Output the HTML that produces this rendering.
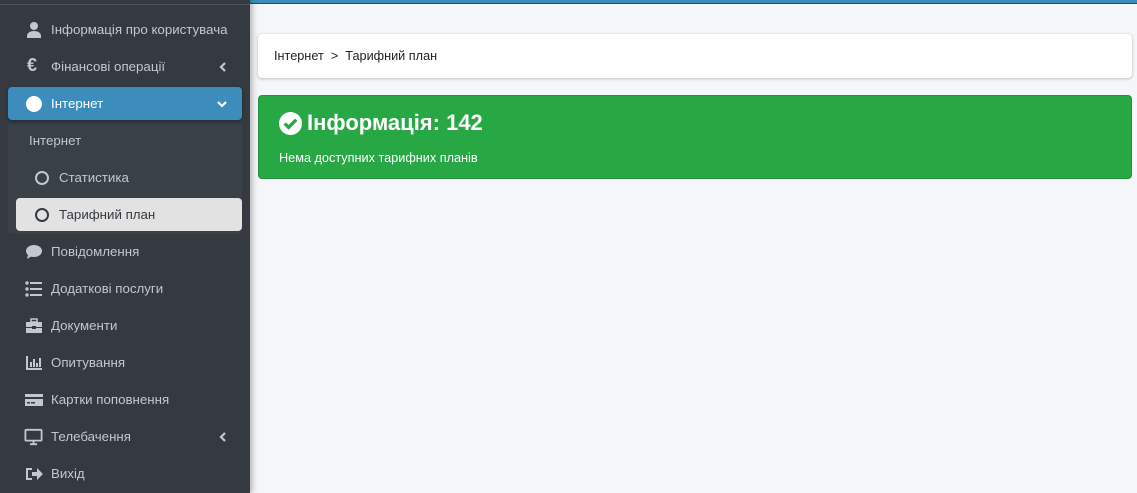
<!DOCTYPE html>
<html><head><meta charset="utf-8"><style>
*{box-sizing:border-box;margin:0;padding:0}
body{width:1137px;height:493px;overflow:hidden;background:#f4f6f9;font-family:"Liberation Sans","DejaVu Sans",sans-serif;font-size:13px;position:relative}
.top{position:absolute;left:250px;top:0;width:887px;height:4px;background:#3c8dbc;border-bottom:1px solid #444}
.sb{position:absolute;left:0;top:0;width:250px;height:493px;background:#343a40;box-shadow:2px 0 6px rgba(0,0,0,.3)}
.sb .tl{position:absolute;left:0;top:4px;width:250px;height:1px;background:#4b545c}
.it{position:absolute;left:8px;width:234px;height:33px;color:#c2c7d0;display:flex;align-items:center;padding-left:43px;font-size:13.3px}
.ic{position:absolute;left:17px;top:8px;width:18px;height:18px}
.act{background:#3c8dbc;color:#fff;border-radius:4px;box-shadow:0 1px 3px rgba(0,0,0,.3)}
.chev{position:absolute;right:15px;top:12px;width:8px;height:10px}
.sub{position:absolute;left:8px;top:124px;width:234px;height:110px;background:#3a4047;border-radius:0 0 4px 4px}
.sel{background:#e2e2e2;color:#343a40}
.circ{position:absolute;left:19px;top:10px;width:14px;height:14px;border:2px solid currentColor;border-radius:50%}
.card{position:absolute;left:258px;top:34px;width:874px;height:44px;background:#fff;border-radius:4px;box-shadow:0 0 1px rgba(0,0,0,.2),0 1px 3px rgba(0,0,0,.2);padding:15px 16px;color:#212529;font-size:12.7px}
.alert{position:absolute;left:258px;top:95px;width:874px;height:84px;background:#28a745;border:1px solid #23923d;border-radius:4px;color:#fff}
.alert h5{position:absolute;left:20px;top:14px;font-size:22px;font-weight:bold;display:flex;align-items:center;gap:5px}
.alert p{position:absolute;left:20px;top:55px;font-size:12.7px}
</style></head><body>
<div class="top"></div>
<div class="sb"><div class="tl"></div>
<div class="it" style="top:13px"><svg class="ic" viewBox="0 0 18 18"><circle cx="9" cy="5" r="4" fill="#c2c7d0"/><path d="M2 17v-2c0-3 3-5 7-5s7 2 7 5v2z" fill="#c2c7d0"/></svg>Інформація про користувача</div>
<div class="it" style="top:50px"><span style="position:absolute;left:19px;top:5px;font-weight:bold;font-size:18px;color:#c2c7d0">€</span>Фінансові операції<svg class="chev" viewBox="0 0 8 10"><path d="M6 1L2 5l4 4" stroke="#c2c7d0" stroke-width="2.2" fill="none"/></svg></div>
<div class="it act" style="top:87px"><svg class="ic" viewBox="0 0 18 18"><circle cx="9" cy="9" r="8" fill="#fff"/></svg>Інтернет<svg class="chev" viewBox="0 0 10 8" style="width:10px;height:8px;top:13px"><path d="M1 2l4 4 4-4" stroke="#fff" stroke-width="2.2" fill="none"/></svg></div>
<div class="sub"></div>
<div class="it" style="top:124px;padding-left:21px">Інтернет</div>
<div class="it" style="top:161px;padding-left:51px"><span class="circ" style="left:27px"></span>Статистика</div>
<div class="it sel" style="top:198px;left:16px;width:226px;border-radius:4px;padding-left:43px"><span class="circ"></span>Тарифний план</div>
<div class="it" style="top:235px"><svg class="ic" viewBox="0 0 18 18"><ellipse cx="9" cy="8" rx="8" ry="6" fill="#c2c7d0"/><path d="M3 12l-1 4 5-3z" fill="#c2c7d0"/></svg>Повідомлення</div>
<div class="it" style="top:272px"><svg class="ic" viewBox="0 0 18 18" fill="#c2c7d0"><circle cx="2" cy="3" r="1.7"/><circle cx="2" cy="9" r="1.7"/><circle cx="2" cy="15" r="1.7"/><rect x="5" y="2" width="12" height="2"/><rect x="5" y="8" width="12" height="2"/><rect x="5" y="14" width="12" height="2"/></svg>Додаткові послуги</div>
<div class="it" style="top:309px"><svg class="ic" viewBox="0 0 18 18" fill="#c2c7d0"><rect x="6" y="2" width="6" height="3" fill="none" stroke="#c2c7d0" stroke-width="1.5"/><rect x="1" y="5" width="16" height="5"/><rect x="1" y="11" width="16" height="5"/><rect x="7" y="9" width="4" height="3" fill="#343a40"/></svg>Документи</div>
<div class="it" style="top:346px"><svg class="ic" viewBox="0 0 18 18" fill="#c2c7d0"><path d="M1 2h2v12h14v2H1z"/><rect x="5" y="8" width="2" height="5"/><rect x="8" y="5" width="2" height="8"/><rect x="11" y="9" width="2" height="4"/><rect x="14" y="4" width="2" height="9"/></svg>Опитування</div>
<div class="it" style="top:383px"><svg class="ic" viewBox="0 0 18 18" fill="#c2c7d0"><rect x="0" y="3" width="18" height="3"/><rect x="0" y="8" width="18" height="7"/><rect x="2" y="11" width="3" height="1.5" fill="#343a40"/><rect x="6" y="11" width="4" height="1.5" fill="#343a40"/></svg>Картки поповнення</div>
<div class="it" style="top:420px"><svg class="ic" viewBox="0 0 20 20" style="left:15px;width:21px" fill="none" stroke="#c2c7d0" stroke-width="2"><rect x="1" y="2" width="18" height="12" rx="1"/><path d="M6 18h8M10 14v4"/></svg>Телебачення<svg class="chev" viewBox="0 0 8 10"><path d="M6 1L2 5l4 4" stroke="#c2c7d0" stroke-width="2.2" fill="none"/></svg></div>
<div class="it" style="top:457px"><svg class="ic" viewBox="0 0 18 18" fill="#c2c7d0"><path d="M1 3h6v2H3v8h4v2H1z"/><path d="M7 7h5V3l6 6-6 6v-4H7z"/></svg>Вихід</div>
</div>
<div class="card">Інтернет &nbsp;&gt;&nbsp; Тарифний план</div>
<div class="alert"><h5><svg width="23" height="23" viewBox="0 0 24 24"><circle cx="12" cy="12" r="12" fill="#fff"/><path d="M6 12l4 4 8-8" stroke="#28a745" stroke-width="3.5" fill="none"/></svg>Інформація: 142</h5><p>Нема доступних тарифних планів</p></div>
</body></html>
